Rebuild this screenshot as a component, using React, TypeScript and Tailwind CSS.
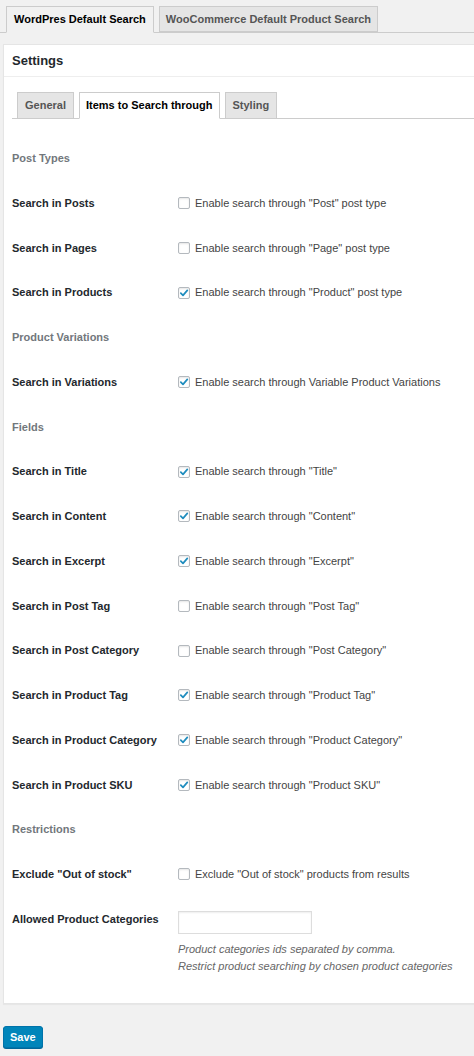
import clsx from 'clsx'

type Row =
  | { kind: 'heading'; label: string }
  | { kind: 'check'; label: string; text: string; checked: boolean }

const ROWS: Row[] = [
  { kind: 'heading', label: 'Post Types' },
  { kind: 'check', label: 'Search in Posts', text: 'Enable search through "Post" post type', checked: false },
  { kind: 'check', label: 'Search in Pages', text: 'Enable search through "Page" post type', checked: false },
  { kind: 'check', label: 'Search in Products', text: 'Enable search through "Product" post type', checked: true },
  { kind: 'heading', label: 'Product Variations' },
  { kind: 'check', label: 'Search in Variations', text: 'Enable search through Variable Product Variations', checked: true },
  { kind: 'heading', label: 'Fields' },
  { kind: 'check', label: 'Search in Title', text: 'Enable search through "Title"', checked: true },
  { kind: 'check', label: 'Search in Content', text: 'Enable search through "Content"', checked: true },
  { kind: 'check', label: 'Search in Excerpt', text: 'Enable search through "Excerpt"', checked: true },
  { kind: 'check', label: 'Search in Post Tag', text: 'Enable search through "Post Tag"', checked: false },
  { kind: 'check', label: 'Search in Post Category', text: 'Enable search through "Post Category"', checked: false },
  { kind: 'check', label: 'Search in Product Tag', text: 'Enable search through "Product Tag"', checked: true },
  { kind: 'check', label: 'Search in Product Category', text: 'Enable search through "Product Category"', checked: true },
  { kind: 'check', label: 'Search in Product SKU', text: 'Enable search through "Product SKU"', checked: true },
  { kind: 'heading', label: 'Restrictions' },
  { kind: 'check', label: 'Exclude "Out of stock"', text: 'Exclude "Out of stock" products from results', checked: false },
]

function Checkbox({ checked }: { checked: boolean }) {
  return (
    <span className="w-[12px] h-[12px] border border-[#b4b9be] rounded-[2px] bg-white shadow-[inset_0_1px_2px_rgba(0,0,0,0.1)] flex items-center justify-center shrink-0">
      {checked && (
        <svg width="10" height="10" viewBox="0 0 10 10">
          <path d="M1.8 5.2 L4 7.4 L8.3 2.4" fill="none" stroke="#1e8cbe" strokeWidth="1.7" strokeLinecap="round" strokeLinejoin="round" />
        </svg>
      )}
    </span>
  )
}

export default function App() {
  return (
    <div
      className="w-[474px] min-h-[1056px] bg-[#f1f1f1] text-[11px] text-[#23282d] overflow-hidden"
      style={{ fontFamily: '"Liberation Sans", Arial, sans-serif' }}
    >
      {/* top tabs */}
      <div className="pt-[6px] pl-[6px] flex gap-[5px] border-b border-[#cccccc] h-[33px]">
        <div className="h-[27px] px-[7px] flex items-center border border-[#cccccc] border-b-[#f1f1f1] bg-[#f1f1f1] font-bold text-[#000]">
          WordPres Default Search
        </div>
        <div className="h-[26px] px-[6px] flex items-center border border-[#cccccc] bg-[#e5e5e5] font-bold text-[#555]">
          WooCommerce Default Product Search
        </div>
      </div>

      {/* settings panel */}
      <div className="mt-[11px] ml-[3px] bg-white border border-[#e5e5e5] border-r-0 shadow-[0_1px_1px_rgba(0,0,0,0.04)]">
        <div className="h-[32px] px-[8px] flex items-center border-b border-[#eeeeee] text-[13px] font-bold">
          Settings
        </div>

        <div className="mt-[15px] ml-[8px] flex items-end gap-[5px] border-b border-[#cccccc] pl-[5px] h-[27px]">
          <div className="h-[26px] px-[7px] flex items-center border border-[#cccccc] border-b-0 bg-[#e5e5e5] font-bold text-[#555]">
            General
          </div>
          <div className="h-[27px] -mb-px px-[6px] flex items-center border border-[#cccccc] border-b-white bg-white font-bold text-[#000]">
            Items to Search through
          </div>
          <div className="h-[26px] px-[7px] flex items-center border border-[#cccccc] border-b-0 bg-[#e5e5e5] font-bold text-[#555]">
            Styling
          </div>
        </div>

        <div className="pt-[17px] px-[8px]">
          {ROWS.map((r, i) =>
            r.kind === 'heading' ? (
              <div key={i} className="h-[44.75px] flex items-center font-bold text-[#72777c]">
                {r.label}
              </div>
            ) : (
              <div key={i} className="h-[44.75px] flex items-center">
                <div className={clsx('w-[166px] shrink-0 font-bold')}>{r.label}</div>
                <label className="flex items-center gap-[5px] text-[#444]">
                  <Checkbox checked={r.checked} />
                  <span>{r.text}</span>
                </label>
              </div>
            ),
          )}

          <div className="flex pt-[14px] pb-[28px]">
            <div className="w-[166px] shrink-0 font-bold">Allowed Product Categories</div>
            <div>
              <div className="w-[134px] h-[23px] border border-[#dddddd] bg-white shadow-[inset_0_1px_2px_rgba(0,0,0,0.07)]" />
              <div className="mt-[7px] italic text-[#666] leading-[17px]">
                <div>Product categories ids separated by comma.</div>
                <div>Restrict product searching by chosen product categories</div>
              </div>
            </div>
          </div>
        </div>
      </div>

      <div className="pt-[22px] pl-[3px]">
        <button className="h-[22px] px-[6px] rounded-[3px] bg-[#0085ba] border border-[#0073aa] text-white font-bold text-[11px] shadow-[0_1px_0_#006799]">
          Save
        </button>
      </div>
    </div>
  )
}
